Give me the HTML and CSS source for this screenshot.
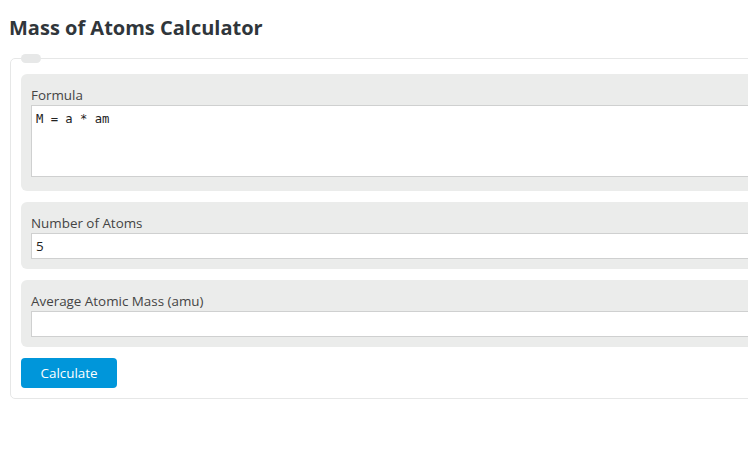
FILE: index.html
```html
<!DOCTYPE html>
<html lang="en">
<head>
    <meta charset="UTF-8">
    <meta name="viewport" content="width=device-width, initial-scale=1.0">
    <title>Mass of Atoms Calculator</title>
    <link rel="stylesheet" href="styles.css">
</head>
<body>
    <h1 class="page-title">Mass of Atoms Calculator</h1>
    <fieldset class="calc">
        <legend class="calc-legend"></legend>
        <div class="field field-formula">
            <label class="field-label" for="formula">Formula</label>
            <textarea id="formula" class="field-area" readonly>M = a * am</textarea>
        </div>
        <div class="field">
            <label class="field-label" for="atoms">Number of Atoms</label>
            <input id="atoms" class="field-input" type="text" value="5">
        </div>
        <div class="field">
            <label class="field-label" for="mass">Average Atomic Mass (amu)</label>
            <input id="mass" class="field-input" type="text" value="">
        </div>
        <button class="calc-button">Calculate</button>
    </fieldset>
</body>
</html>
```

FILE: styles.css
```css
html, body {
    overflow: hidden;
}

body {
    margin: 0;
    padding: 0 0 0 9px;
    background: #fff;
    font-family: 'Open Sans', 'Segoe UI', Arial, sans-serif;
    color: #444;
    width: 900px;
}

.page-title {
    font-size: 20px;
    font-weight: 700;
    color: #30363b;
    margin: 14px 0 13px;
    line-height: 27px;
}

.calc {
    margin: 0 0 0 1px;
    padding: 11px 10px 10px;
    border: 1px solid #e6e7e7;
    border-radius: 5px;
    width: 780px;
    box-sizing: border-box;
}

.calc-legend {
    width: 20px;
    height: 9px;
    padding: 0;
    background: #e7e8e8;
    border-radius: 5px;
}

.field {
    background: #ebeceb;
    border-radius: 6px;
    padding: 12px 10px 10px;
    margin-bottom: 11px;
}

.field-formula {
    padding-bottom: 14px;
}

.field-label {
    display: block;
    font-size: 13.4px;
    line-height: 19px;
    color: #444;
}

.field-area,
.field-input {
    display: block;
    width: 100%;
    box-sizing: border-box;
    margin: 0;
    border: 1px solid #cfd0d0;
    background: #fff;
    color: #222;
    outline: none;
}

.field-area {
    height: 72px;
    resize: none;
    padding: 5px 4px;
    font-family: 'DejaVu Sans Mono', monospace;
    font-size: 12.2px;
    line-height: 16px;
}

.field-input {
    height: 26px;
    padding: 0 4px;
    font-family: 'Open Sans', Arial, sans-serif;
    font-size: 13.4px;
}

.calc-button {
    display: block;
    width: 96px;
    height: 30px;
    background: #0096da;
    color: #fff;
    border: none;
    border-radius: 4px;
    font-family: 'Open Sans', Arial, sans-serif;
    font-size: 13.4px;
    cursor: pointer;
}
```
